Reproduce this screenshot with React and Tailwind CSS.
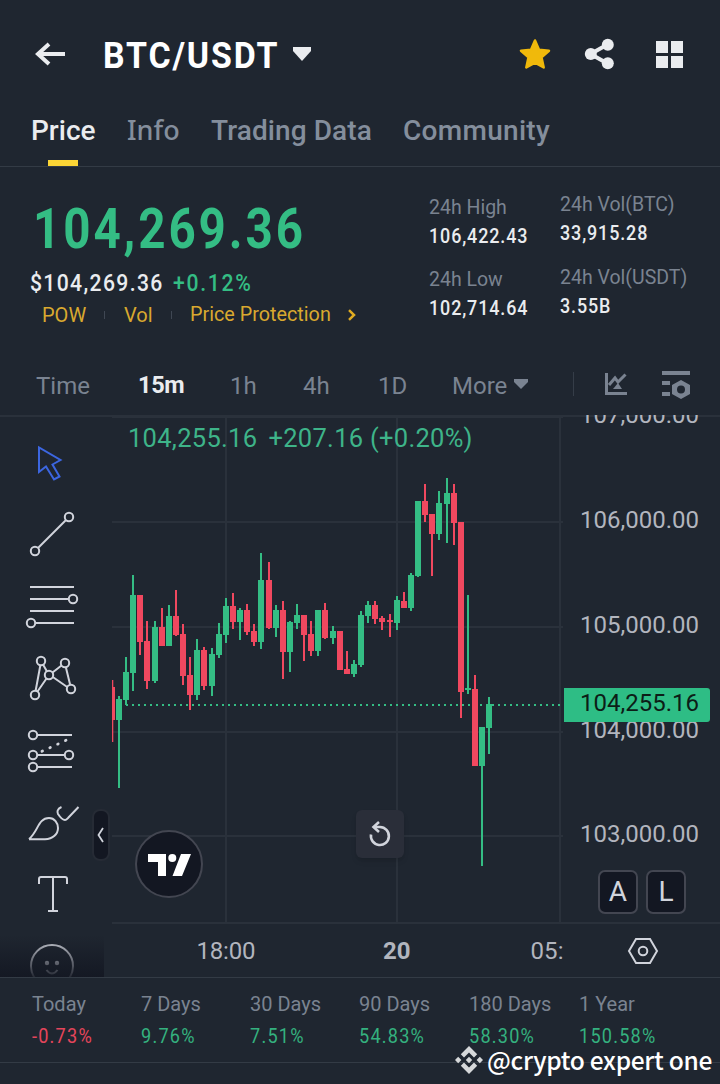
import React from "react";

// x, wick top, wick bottom, body top, body bottom, rising
const CANDLES = [
  [119, 696, 788, 699, 720, 1],
  [126, 657, 705, 672, 700, 1],
  [133, 575, 691, 595, 673, 1],
  [140, 595, 655, 595, 642, 0],
  [147, 621, 689, 641, 681, 0],
  [155, 621, 683, 627, 681, 1],
  [162, 608, 646, 627, 646, 0],
  [169, 605, 646, 616, 646, 1],
  [176, 590, 636, 616, 635, 0],
  [183, 624, 685, 634, 676, 0],
  [190, 657, 710, 675, 695, 0],
  [197, 639, 700, 650, 695, 1],
  [204, 647, 690, 650, 686, 0],
  [212, 648, 696, 654, 686, 1],
  [219, 623, 658, 634, 655, 1],
  [226, 598, 643, 606, 635, 1],
  [233, 593, 629, 606, 622, 0],
  [240, 608, 640, 610, 622, 1],
  [247, 604, 635, 610, 632, 0],
  [254, 624, 646, 631, 642, 0],
  [261, 553, 649, 580, 642, 1],
  [269, 562, 629, 580, 628, 0],
  [276, 605, 637, 610, 628, 1],
  [283, 601, 679, 610, 652, 0],
  [290, 621, 672, 622, 652, 1],
  [297, 604, 629, 615, 623, 1],
  [304, 615, 661, 615, 635, 0],
  [311, 621, 656, 634, 651, 0],
  [318, 610, 656, 610, 651, 1],
  [325, 603, 639, 610, 638, 0],
  [333, 626, 644, 631, 638, 1],
  [340, 631, 670, 631, 670, 0],
  [347, 651, 674, 669, 674, 0],
  [354, 660, 677, 664, 674, 1],
  [361, 611, 667, 615, 665, 1],
  [368, 601, 623, 605, 616, 1],
  [375, 601, 624, 605, 619, 0],
  [382, 616, 630, 618, 622, 0],
  [390, 614, 637, 620, 622, 0],
  [397, 596, 630, 600, 623, 1],
  [404, 592, 608, 601, 608, 0],
  [411, 573, 611, 575, 608, 1],
  [418, 501, 577, 501, 576, 1],
  [425, 484, 522, 501, 515, 0],
  [432, 514, 576, 514, 534, 0],
  [439, 491, 540, 503, 534, 1],
  [447, 478, 543, 493, 504, 1],
  [454, 484, 545, 493, 523, 0],
  [461, 522, 718, 522, 692, 0],
  [468, 595, 694, 688, 690, 1],
  [475, 675, 766, 689, 766, 0],
  [482, 727, 866, 727, 766, 1],
  [489, 697, 754, 704, 728, 1],
];

const UP = "#34bd84";
const DOWN = "#f0485f";

function Header() {
  return (
    <header className="flex h-[104px] items-center pt-1">
      <svg className="ml-[34px] h-6 w-8 shrink-0" viewBox="34 42 32 24" fill="none" stroke="#eaecef" strokeWidth="4">
        <path d="M49 44 L38 54 L49 64 M37 54 H65" />
      </svg>
      <h1 className="ml-[37px] w-[189px] origin-left scale-x-[0.94] pt-1 whitespace-nowrap text-[36px] leading-none font-bold tracking-[2px] text-white">BTC/USDT</h1>
      <svg className="h-4 w-5 shrink-0" viewBox="292 46 20 16" fill="#eaecef">
        <path d="M293 47 H311 V51 L302 61 L293 51 Z" />
      </svg>
      <svg className="ml-[207px] h-8 w-8 shrink-0" viewBox="519 38 32 32" fill="#f0b90b" stroke="#f0b90b" strokeWidth="2.5" strokeLinejoin="round">
        <path d="M535 40.5 L539 49.7 L549 50.7 L541.5 57.3 L543.7 67.5 L535 62.6 L526.3 67.5 L528.5 57.3 L521 50.7 L531 49.7 Z" />
      </svg>
      <svg className="ml-[33px] h-8 w-8 shrink-0" viewBox="584 38 32 32" fill="#eaecef" stroke="#eaecef">
        <path d="M607.5 44.5 L590.5 54 L607.5 63.5" fill="none" strokeWidth="4" />
        <circle cx="590.8" cy="54" r="6" stroke="none" />
        <circle cx="607.8" cy="44.7" r="6" stroke="none" />
        <circle cx="607.8" cy="63.3" r="6" stroke="none" />
      </svg>
      <div className="ml-[40px] grid grid-cols-2 gap-[3px]">
        <i className="size-[12px] bg-[#eaecef]" />
        <i className="size-[12px] bg-[#eaecef]" />
        <i className="size-[12px] bg-[#eaecef]" />
        <i className="size-[12px] bg-[#eaecef]" />
      </div>
    </header>
  );
}

function Tabs() {
  return (
    <nav className="flex h-[63px] border-b border-[#333b45] pl-[31px] text-[28px] leading-[54px] font-medium whitespace-nowrap text-[#848e9c]">
      <div className="flex w-24 flex-col text-[#eaecef]">
        <span>Price</span>
        <i className="mt-[2px] ml-[17px] h-[6px] w-[30px] bg-[#fcd535]" />
      </div>
      <span className="w-[84px] font-['Noto_Sans'] text-[27px] leading-[51px]">Info</span>
      <span className="w-[192px] tracking-[0.1px]">Trading Data</span>
      <span className="tracking-[0.3px]">Community</span>
    </nav>
  );
}

function Figure({ label, value, className }) {
  return (
    <div className={className}>
      <div className="text-[19.5px] leading-[26px] text-[#7a8390]">{label}</div>
      <div className="origin-left scale-x-[0.92] text-[19.5px] leading-[32px] font-medium tracking-[0.95px] text-[#eaecef]">{value}</div>
    </div>
  );
}

function PriceSummary() {
  return (
    <section className="flex h-[189px] whitespace-nowrap">
      <div className="w-[429px] shrink-0 pt-[30px]">
        <div className="ml-[33px] h-[68px] origin-left scale-x-[0.85] text-[56px] leading-[65px] font-bold tracking-[3.4px] text-[#34bd84]">104,269.36</div>
        <div className="flex h-[36px] text-[23.5px] leading-[36px] font-medium">
          <span className="ml-[30px] w-[143px] origin-left scale-x-[0.9] tracking-[1.5px] text-[#eaecef]">$104,269.36</span>
          <span className="origin-left scale-x-[0.9] tracking-[1.9px] text-[#34bd84]">+0.12%</span>
        </div>
        <div className="flex h-[27px] items-center text-[20px] text-[#d9a92f]">
          <span className="ml-[42px] w-[62px]">POW</span>
          <i className="mr-[19px] h-2 w-px bg-[#3f4753]" />
          <span className="w-[47px]">Vol</span>
          <i className="mr-[18px] h-2 w-px bg-[#3f4753]" />
          <span className="w-[158px] text-[19.8px]">Price Protection</span>
          <svg className="h-3 w-2" viewBox="0 0 8 12" fill="none" stroke="#e0ac22" strokeWidth="2.5">
            <path d="M1 1.2 L6 6 L1 10.8" />
          </svg>
        </div>
      </div>
      <div className="flex w-[131px] shrink-0 flex-col gap-[14px] pt-[28px]">
        <Figure label="24h High" value="106,422.43" />
        <Figure label="24h Low" value="102,714.64" />
      </div>
      <div className="flex flex-col gap-[15px] pt-[25px]">
        <Figure label="24h Vol(BTC)" value="33,915.28" />
        <Figure label="24h Vol(USDT)" value="3.55B" />
      </div>
    </section>
  );
}

function Intervals() {
  return (
    <div className="flex h-[59px] items-center whitespace-nowrap text-[24px] text-[#7a8391]">
      <span className="ml-[36px] w-[102px]">Time</span>
      <span className="w-[92px] pt-px text-[23.5px] font-bold tracking-[-0.3px] text-[#eaecef]">15m</span>
      <span className="w-[73px]">1h</span>
      <span className="w-[75px]">4h</span>
      <span className="w-[74px]">1D</span>
      <span className="w-[62px]">More</span>
      <svg className="mb-1 h-3 w-[14px]" viewBox="0 0 14 12" fill="#7a8391">
        <path d="M0 1 H14 V4 L7 11 L0 4 Z" />
      </svg>
      <i className="mb-1 ml-[45px] h-6 w-px bg-[#353d48]" />
      <svg className="mb-1 ml-[30px] h-7 w-6" viewBox="604 370 24 28" fill="none" stroke="#7a8391" strokeWidth="3">
        <path d="M606.5 373 V393.5 H627" />
        <path d="M609 385 L615 378 L618 382 L625.5 374.5" />
        <path d="M613 389 L618 383 L622 389 Z" fill="#7a8391" stroke="none" />
      </svg>
      <svg className="ml-[33px] h-8 w-[30px]" viewBox="661 370 30 32" fill="#7a8391">
        <path d="M662 371 H690 V375 H662 Z M662 381 H670 V385 H662 Z M662 392 H670 V396 H662 Z" />
        <path fillRule="evenodd" d="M681 380 L690 385 V394 L681 399 L672 394 V385 Z M681 385.5 A4 4 0 1 0 681 393.5 A4 4 0 1 0 681 385.5 Z" />
      </svg>
    </div>
  );
}

function Tool({ top, height = 72, children }) {
  return (
    <svg
      className="w-[104px] shrink-0"
      height={height}
      viewBox={`0 ${top} 104 ${height}`}
      fill="none"
      stroke="#d1d4dc"
      strokeWidth="2"
    >
      {children}
    </svg>
  );
}

function Toolbar() {
  return (
    <aside className="relative flex w-[104px] shrink-0 flex-col overflow-hidden pt-[13px]">
      <Tool top={428}>
        <path stroke="#3c66e0" d="M39 447.5 V472 L46 466.5 L54 479.5 L59.5 476.5 L52.5 464.5 L60.5 460 Z" />
      </Tool>
      <Tool top={500}>
        <circle cx="35" cy="551" r="4.2" />
        <circle cx="69" cy="517" r="4.2" />
        <path d="M38 548 L66 520" />
      </Tool>
      <Tool top={572}>
        <path d="M30 587 H74 M30 599 H68.5 M30 611 H74 M35.5 623 H74" />
        <circle cx="73" cy="599" r="4.2" />
        <circle cx="31" cy="623" r="4.2" />
      </Tool>
      <Tool top={644}>
        <circle cx="41" cy="661" r="4.2" />
        <circle cx="65" cy="663" r="4.2" />
        <circle cx="49" cy="675" r="4.2" />
        <circle cx="35" cy="695" r="4.2" />
        <circle cx="71" cy="689" r="4.2" />
        <path d="M40.4 665 L35.6 691 M37.5 691.5 L46.5 678.5 M43 664.5 L47 671.5 M52.5 672.5 L61.5 665.5 M65.8 667 L70.2 685 M52.8 677 L67.2 687" />
      </Tool>
      <Tool top={716}>
        <circle cx="33" cy="735" r="4.2" />
        <circle cx="33" cy="755" r="4.2" />
        <circle cx="69" cy="755" r="4.2" />
        <circle cx="33" cy="767" r="4.2" />
        <path d="M37.5 735 H72 M37.5 755 H64.5 M37.5 767 H72" />
        <path d="M42 751.3 L70 738.5" strokeWidth="2.8" strokeLinecap="round" strokeDasharray="0.6 8" />
      </Tool>
      <Tool top={788}>
        <path d="M29 839 C38 832 38 818 49 818 C54.5 818 58 823 58 828 C58 834 53 839.2 45 839.2 H29" />
        <path d="M61.5 807 C57 809 57 812 58 814 C60 817 62 820 65 820 C66.5 820 67 819 68 818 L78.5 807" />
      </Tool>
      <Tool top={860}>
        <path d="M39 884 V879 Q39 877 41 877 H65 Q67 877 67 879 V884 M53 877 V911 M48 911 H58" />
      </Tool>
      <Tool top={932} height={45}>
        <circle cx="52" cy="966" r="21" />
        <circle cx="47" cy="963" r="1.2" fill="#d1d4dc" />
        <circle cx="57" cy="963" r="1.2" fill="#d1d4dc" />
        <path d="M46.5 970 Q52 977 57.5 970" />
      </Tool>
      <div className="absolute inset-x-0 bottom-0 h-[42px] bg-linear-to-b from-[#131722]/0 to-[#131722]/90" />
    </aside>
  );
}

function AxisLabel({ y, fill = "#b2b5be", children }) {
  return (
    <text x="580" y={y} fontSize="24" textLength="119" fill={fill}>
      {children}
    </text>
  );
}

function PriceChart() {
  return (
    <svg className="relative h-[562px] w-[616px] shrink-0" viewBox="104 415 616 562" fontFamily="Roboto, sans-serif">
      <g fill="#2a313b">
        <rect x="112" y="416" width="451" height="2" />
        <rect x="112" y="521" width="451" height="2" />
        <rect x="112" y="626" width="451" height="2" />
        <rect x="112" y="731" width="451" height="2" />
        <rect x="112" y="835" width="451" height="2" />
        <rect x="112" y="922" width="608" height="2" />
        <rect x="225" y="415" width="2" height="507" />
        <rect x="396" y="415" width="2" height="507" />
        <rect x="559" y="415" width="2" height="507" />
      </g>
      <path d="M120 705 H564" stroke={UP} strokeWidth="2" strokeDasharray="2 4" />
      <rect x="112" y="680" width="1.3" height="62" fill={DOWN} />
      <rect x="112" y="687" width="3" height="33" fill={DOWN} />
      {CANDLES.map(([x, high, low, top, bottom, up]) => (
        <g key={x} fill={up ? UP : DOWN}>
          <rect x={x - 1} y={high} width="2" height={low - high} />
          <rect x={x - 3} y={top} width="6" height={bottom - top} />
        </g>
      ))}
      <g fontSize="25.5" fill="#3eb489">
        <text x="128" y="447" textLength="129">104,255.16</text>
        <text x="268.500" y="447" textLength="204">+207.16 (+0.20%)</text>
      </g>
      <AxisLabel y={423}>107,000.00</AxisLabel>
      <AxisLabel y={528}>106,000.00</AxisLabel>
      <AxisLabel y={633}>105,000.00</AxisLabel>
      <AxisLabel y={738}>104,000.00</AxisLabel>
      <AxisLabel y={842}>103,000.00</AxisLabel>
      <path d="M564 688 H707 Q710 688 710 691 V719 Q710 722 707 722 H564 Z" fill="#2ebd85" />
      <AxisLabel y={711} fill="#0c1d17">104,255.16</AxisLabel>
      <g fontSize="24" fill="#b2b5be">
        <text x="196.500" y="959" textLength="59">18:00</text>
        <text x="383" y="959" textLength="27.500" fontWeight="700">20</text>
        <text x="530.500" y="959" textLength="33">05:</text>
      </g>
      <g fill="none" stroke="#d1d4dc" strokeWidth="2">
        <path d="M636 939 H650 L657 951 L650 963 H636 L629 951 Z" />
        <circle cx="643" cy="951" r="4.3" />
      </g>
      <circle cx="169" cy="864" r="33" fill="#131722" stroke="#434651" strokeWidth="2" />
      <g fill="#fff">
        <path d="M148 854 H166 V876 H158 V862 H148 Z M181 854 H191 L182 876 H172.500 Z" />
        <circle cx="172.300" cy="858" r="4" />
      </g>
      <g fill="#131722" stroke="#434651" strokeWidth="2">
        <rect x="599" y="871" width="38" height="42" rx="6" />
        <rect x="647" y="871" width="38" height="42" rx="6" />
      </g>
      <g fontSize="28" fill="#d1d4dc" textAnchor="middle">
        <text x="618" y="901">A</text>
        <text x="666" y="901">L</text>
      </g>
    </svg>
  );
}

function Chart() {
  return (
    <section className="relative flex h-[563px] overflow-hidden border-b border-[#333b45]">
      <i className="absolute inset-x-0 top-0 h-[2px] bg-[#2a313b]" />
      <Toolbar />
      <PriceChart />
      <div className="absolute top-[394px] left-[92px] flex h-[52px] w-[18px] items-center justify-center rounded-[8px] border-2 border-[#262b35] bg-[#131722]">
        <svg className="mr-px h-4 w-[7px]" viewBox="0 0 7 16" fill="none" stroke="#d1d4dc" strokeWidth="1.8">
          <path d="M6 1 L1.500 8 L6 15" />
        </svg>
      </div>
      <div className="absolute top-[395px] left-[356px] flex size-12 items-center justify-center rounded-[6px] bg-[#2a2e39] shadow-md">
        <svg className="h-7 w-7" viewBox="366 820 28 28" fill="none" stroke="#d1d4dc" strokeWidth="2.600">
          <path d="M371 834.500 A9 9 0 1 0 380 827 H374" />
          <path d="M379 822 L373.500 827 L379 832" />
        </svg>
      </div>
    </section>
  );
}

function Change({ label, value, down, className }) {
  return (
    <div className={`shrink-0 ${className}`}>
      <div className="text-[20px] leading-[32px] text-[#7a8390]">{label}</div>
      <div className={`origin-left scale-x-[0.93] text-[19.5px] leading-[34px] tracking-[1.3px] ${down ? "text-[#e5455b]" : "text-[#34b17f]"}`}>{value}</div>
    </div>
  );
}

function Performance() {
  return (
    <section className="flex h-[85px] whitespace-nowrap border-b border-[#333b45] pt-[10px] pl-[32px]">
      <Change className="w-[109px]" label="Today" value="-0.73%" down />
      <Change className="w-[109px]" label="7 Days" value="9.76%" />
      <Change className="w-[109px]" label="30 Days" value="7.51%" />
      <Change className="w-[110px]" label="90 Days" value="54.83%" />
      <Change className="w-[110px]" label="180 Days" value="58.30%" />
      <Change label="1 Year" value="150.58%" />
    </section>
  );
}

function Credit() {
  return (
    <div className="absolute right-[8px] bottom-[6px] flex h-9 items-center whitespace-nowrap">
      <svg className="mr-1 size-7" viewBox="0 0 28 28" fill="#d6d8da">
        <path d="M14 0 L22.200 8.200 L19 11.400 L14 6.400 L9 11.400 L5.800 8.200 Z M14 28 L22.200 19.800 L19 16.600 L14 21.600 L9 16.600 L5.800 19.800 Z M0 14 L3.200 10.800 L6.400 14 L3.200 17.200 Z M21.600 14 L24.800 10.800 L28 14 L24.800 17.200 Z M14 10.800 L17.200 14 L14 17.200 L10.800 14 Z" />
      </svg>
      <span className="font-['Noto_Sans_CJK_SC',sans-serif] text-[24.5px] font-medium tracking-[-0.3px] text-white">@crypto expert one</span>
    </div>
  );
}

export default function App() {
  return (
    <main className="relative h-[1084px] w-[720px] overflow-hidden bg-[#1f2630] font-['Roboto',sans-serif]">
      <Header />
      <Tabs />
      <PriceSummary />
      <Intervals />
      <Chart />
      <Performance />
      <Credit />
    </main>
  );
}
